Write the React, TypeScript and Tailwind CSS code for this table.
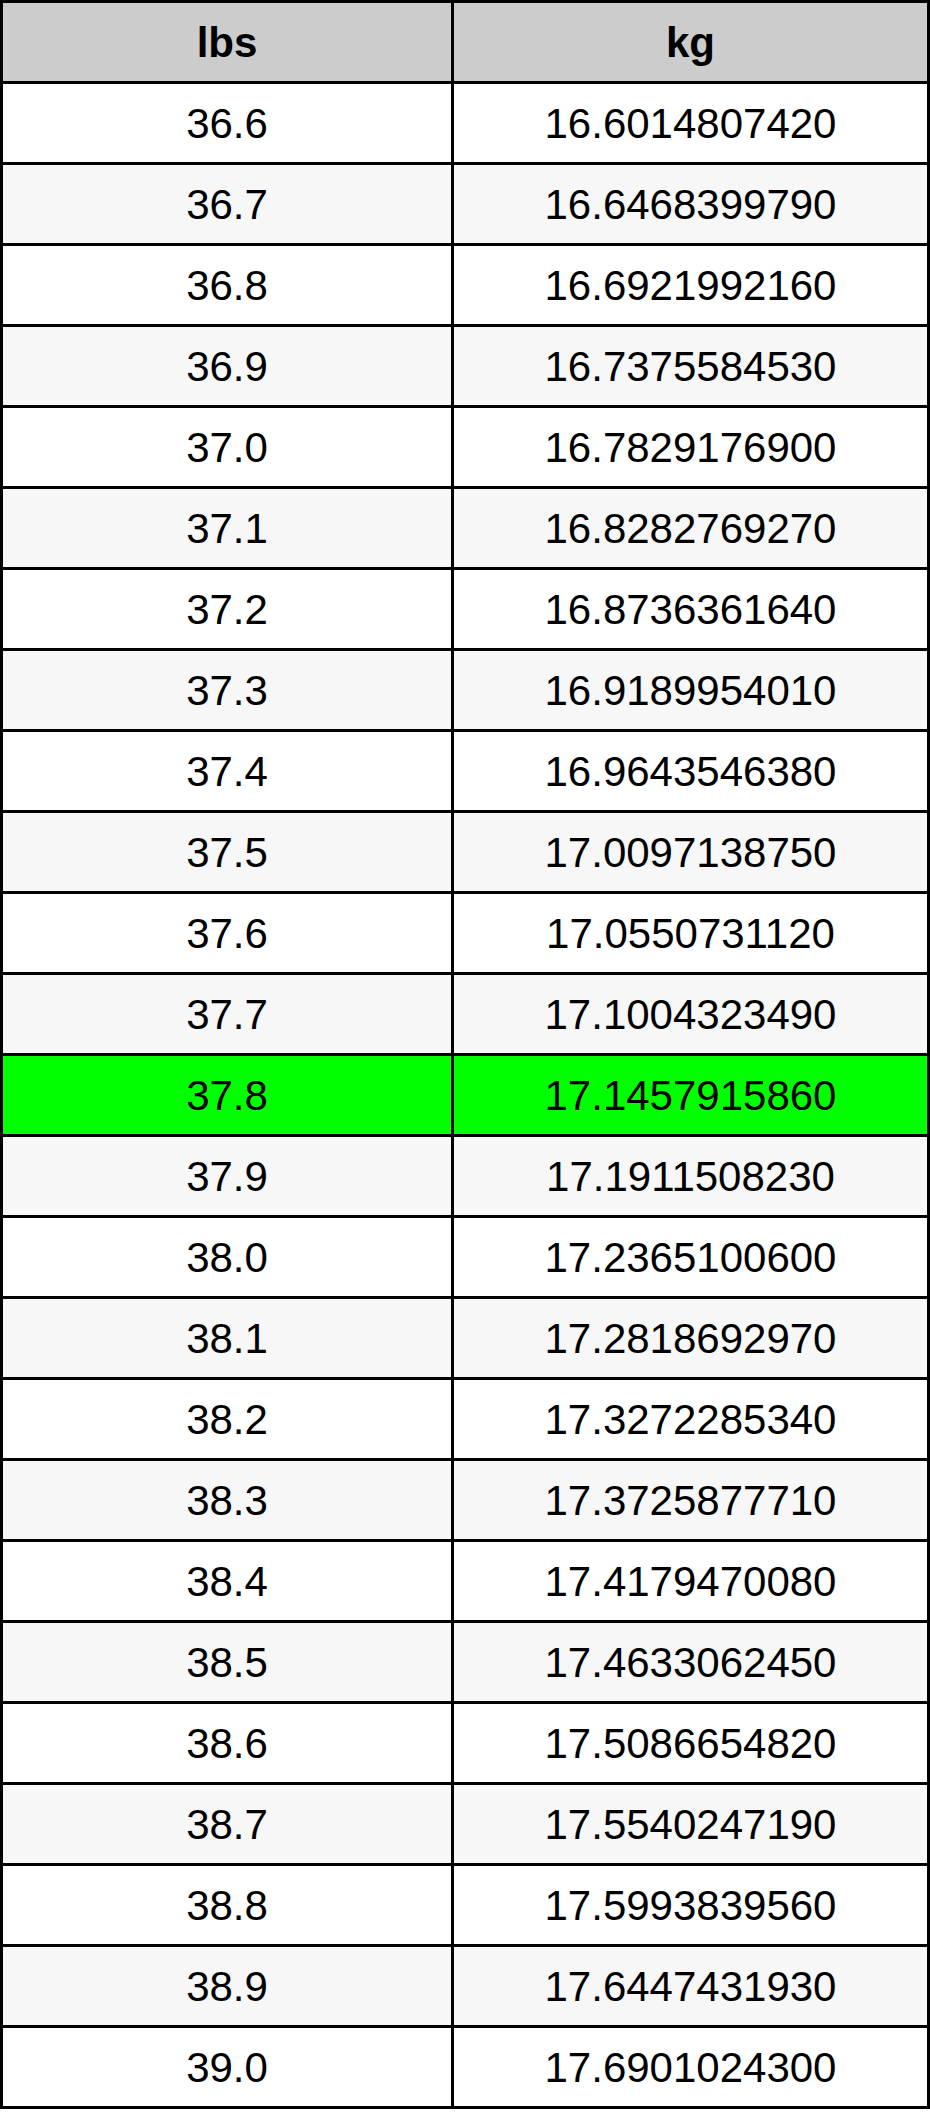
const rows: [string, string][] = [
  ["36.6", "16.6014807420"],
  ["36.7", "16.6468399790"],
  ["36.8", "16.6921992160"],
  ["36.9", "16.7375584530"],
  ["37.0", "16.7829176900"],
  ["37.1", "16.8282769270"],
  ["37.2", "16.8736361640"],
  ["37.3", "16.9189954010"],
  ["37.4", "16.9643546380"],
  ["37.5", "17.0097138750"],
  ["37.6", "17.0550731120"],
  ["37.7", "17.1004323490"],
  ["37.8", "17.1457915860"],
  ["37.9", "17.1911508230"],
  ["38.0", "17.2365100600"],
  ["38.1", "17.2818692970"],
  ["38.2", "17.3272285340"],
  ["38.3", "17.3725877710"],
  ["38.4", "17.4179470080"],
  ["38.5", "17.4633062450"],
  ["38.6", "17.5086654820"],
  ["38.7", "17.5540247190"],
  ["38.8", "17.5993839560"],
  ["38.9", "17.6447431930"],
  ["39.0", "17.6901024300"],
];

export default function App() {
  return (
    <div className="w-[930px] bg-white font-['Liberation_Sans',Arial,sans-serif] text-[42px] text-black">
      {/* black background shows through the gaps as cell borders */}
      <div className="grid grid-cols-[448px_473px] gap-[3px] bg-black p-[3px]">
        <div className="flex h-[78px] items-center justify-center bg-[#cccccc] font-bold">lbs</div>
        <div className="flex h-[78px] items-center justify-center bg-[#cccccc] font-bold">kg</div>
        {rows.map(([lbs, kg], i) => {
          const bg =
            lbs === "37.8" ? "bg-[#00ff00]" : i % 2 === 1 ? "bg-[#f7f7f7]" : "bg-white";
          return [
            <div key={lbs + "a"} className={`flex h-[78px] items-center justify-center ${bg}`}>
              {lbs}
            </div>,
            <div key={lbs + "b"} className={`flex h-[78px] items-center justify-center ${bg}`}>
              {kg}
            </div>,
          ];
        })}
      </div>
    </div>
  );
}
